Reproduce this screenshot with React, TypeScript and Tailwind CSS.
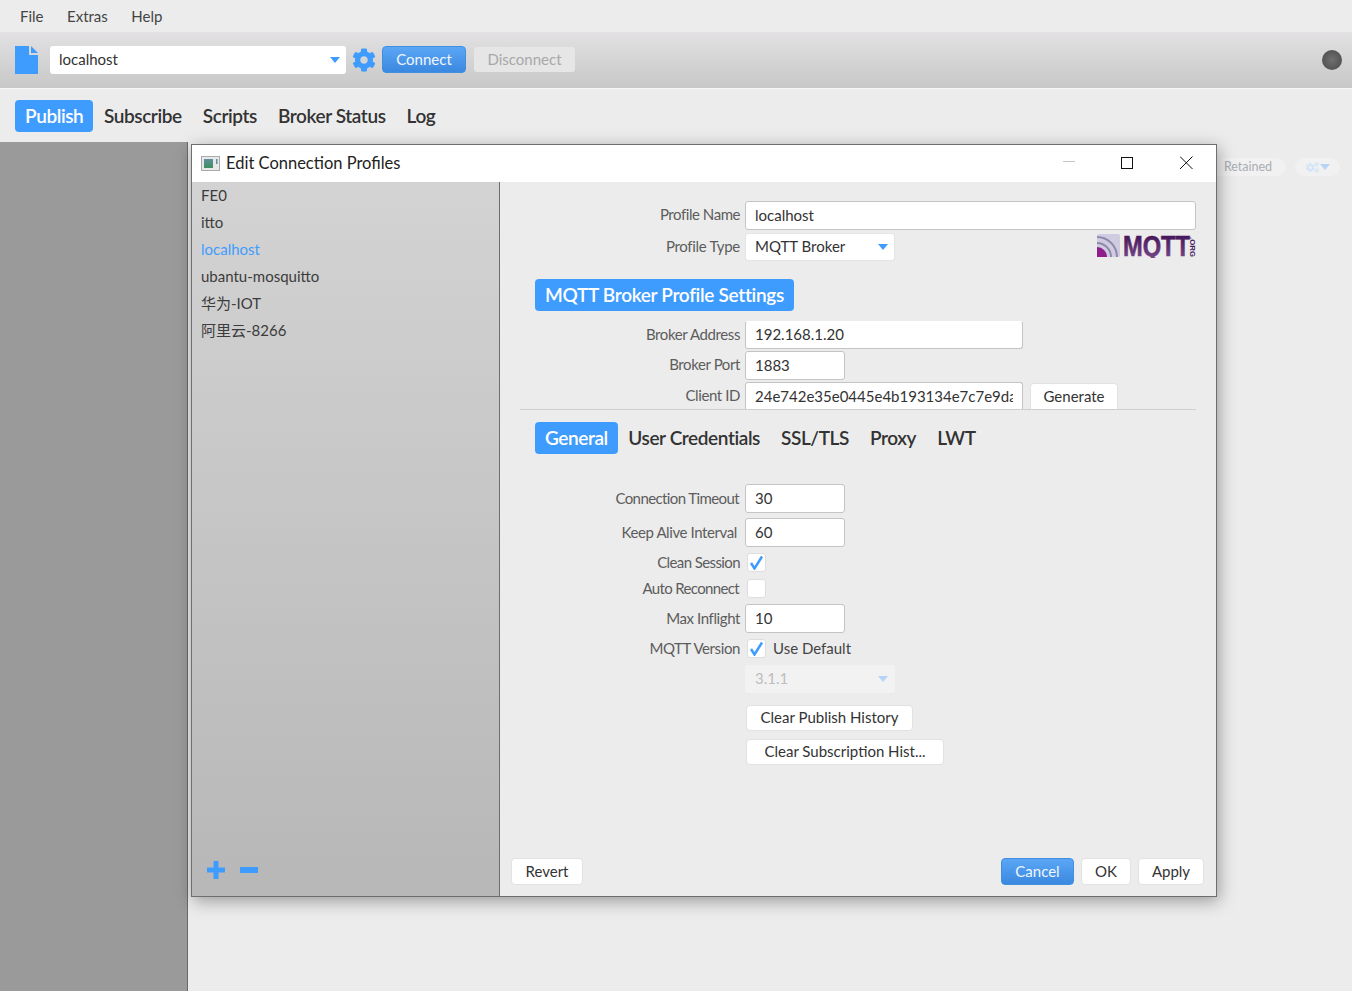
import type { ReactNode } from 'react';
import { FaCog, FaCogs } from 'react-icons/fa';

const font = "font-['Lato','Noto_Sans_CJK_SC',sans-serif]";

function Label({ children, className = '', track = 'tracking-[-0.4px]' }: { children: ReactNode; className?: string; track?: string }) {
  return <div className={`w-[245px] shrink-0 text-right text-[15px] leading-[19px] text-[#5c5c5c] ${track} ${className}`}>{children}</div>;
}

function Field({ value, className = '' }: { value: string; className?: string }) {
  return (
    <div className={`flex items-center overflow-hidden rounded-[3px] border border-[#c4c4c4] bg-white pl-[9px] text-[15px] text-[#333] ${className}`}>
      <span className="whitespace-nowrap">{value}</span>
    </div>
  );
}

function Btn({ children, className = '' }: { children: ReactNode; className?: string }) {
  return (
    <div className={`flex items-center justify-center rounded-[4px] border border-[#e2e2e2] bg-white text-[15px] text-[#333] ${className}`}>
      {children}
    </div>
  );
}

function Caret({ color = '#3f9cff' }: { color?: string }) {
  return (
    <svg width="10" height="6" viewBox="0 0 10 6" className="shrink-0">
      <path d="M0 0h10L5 6z" fill={color} />
    </svg>
  );
}

function Check({ checked }: { checked?: boolean }) {
  return (
    <div className="ml-[2px] flex h-[19px] w-[19px] items-center justify-center rounded-[3px] border border-[#dedede] bg-white">
      {checked && (
        <svg width="15" height="15" viewBox="0 0 15 15" fill="none">
          <path d="M2 8l3.500 5.500L13 1.500" stroke="#3f9cff" strokeWidth="2.500" />
        </svg>
      )}
    </div>
  );
}

function TabRow({ items, className = '' }: { items: string[]; className?: string }) {
  return (
    <div className={`flex items-center text-[19px] font-semibold tracking-[-0.4px] text-[#333] ${className}`}>
      {items.map((t, i) =>
        i === 0 ? (
          <div key={t} className="flex h-[32px] items-center rounded-[4px] bg-[#3f9cff] px-[10px] text-white">{t}</div>
        ) : (
          <div key={t} className="px-[10.500px]">{t}</div>
        ),
      )}
    </div>
  );
}

function MqttLogo() {
  return (
    <svg width="99" height="24" viewBox="0 0 99 24" className="mt-[1px] self-start">
      <defs>
        <linearGradient id="mq" x1="0" y1="0" x2="0" y2="1">
          <stop offset="0" stopColor="#3a0a4f" />
          <stop offset="1" stopColor="#7d4f8e" />
        </linearGradient>
      </defs>
      <rect x="0" y="0" width="23" height="23" rx="2" fill="#cfcbe0" />
      <path d="M0 3a20 20 0 0 1 20 20M0 9a14 14 0 0 1 14 14" stroke="#8f88ac" strokeWidth="2" fill="none" />
      <path d="M0 13a10 10 0 0 1 10 10H0z" fill="#8e1f8a" />
      <text x="26" y="22" textLength="67" lengthAdjust="spacingAndGlyphs" fontFamily="Liberation Sans" fontWeight="700" fontSize="29" fill="url(#mq)" stroke="url(#mq)" strokeWidth="0.600">MQTT</text>
      <text x="0" y="0" textLength="20" lengthAdjust="spacingAndGlyphs" transform="translate(93 3) rotate(90)" fontFamily="Liberation Sans" fontWeight="700" fontSize="8" fill="#4a1a60">.ORG</text>
    </svg>
  );
}

export default function App() {
  return (
    <div className={`relative flex h-[991px] w-[1352px] flex-col overflow-hidden bg-[#ececec] ${font}`}>
      {/* menu bar */}
      <div className="flex h-[32px] items-center gap-[23.500px] pl-[20px] text-[15px] text-[#444]">
        <span>File</span>
        <span>Extras</span>
        <span>Help</span>
      </div>

      {/* toolbar */}
      <div className="flex h-[57px] items-center border-b border-[#f6f6f6] bg-gradient-to-b from-[#e3e1e3] to-[#c8c8c8] pb-[1px] pl-[15px] pr-[10px]">
        <svg width="23" height="28" viewBox="0 0 23 28">
          <path d="M0 0h14v9h9v19H0z" fill="#3f9cff" />
          <path d="M16 0l7 7h-7z" fill="#3f9cff" />
        </svg>
        <div className="ml-[12px] flex h-[28px] w-[296px] items-center justify-between rounded-[3px] bg-white pl-[9px] pr-[6px] text-[15px] text-[#333]">
          <span>localhost</span>
          <Caret />
        </div>
        <FaCog size={24} color="#3f9cff" className="ml-[6px] shrink-0" />
        <div className="ml-[6px] flex h-[27px] w-[84px] items-center justify-center rounded-[4px] border border-[#3f8fe0] bg-gradient-to-b from-[#5ba6f5] to-[#3a88e0] text-[15px] text-[#f0f6ff]">Connect</div>
        <div className="ml-[8px] flex h-[25px] w-[101px] items-center justify-center rounded-[3px] bg-[#e6e6e6] text-[15px] text-[#a8a8a8]">Disconnect</div>
        <div className="ml-auto h-[20px] w-[20px] rounded-full bg-[radial-gradient(circle,#707070,#484848)]" />
      </div>

      {/* main tabs */}
      <TabRow items={['Publish', 'Subscribe', 'Scripts', 'Broker Status', 'Log']} className="h-[53px] shrink-0 pl-[15px] pt-[1px]" />

      {/* dimmed window body */}
      <div className="flex flex-1">
        <div className="w-[188px] border-r border-[#6a6a6a] bg-[#9a9a9a]" />
        <div className="flex flex-1 items-start justify-end gap-[9px] pr-[12px] pt-[16px]">
          <div className="flex h-[18px] w-[76px] items-center justify-center rounded-full bg-[#f1f1f1] text-[12.500px] text-[#a9adb3]">Retained</div>
          <div className="flex h-[18px] w-[45px] items-center justify-center gap-[1px] rounded-full bg-[#f1f1f1]">
            <FaCogs size={13} color="#d3e5f7" />
            <Caret color="#b6d5f6" />
          </div>
        </div>
      </div>

      {/* modal dialog */}
      <div className="absolute left-[191px] top-[144px] flex h-[753px] w-[1026px] flex-col border border-[#6e6e6e] bg-[#ececec] shadow-[2px_4px_16px_rgba(0,0,0,0.35)]">
        <div className="flex h-[37px] shrink-0 items-center bg-white pb-[1px] pl-[9px] text-[16.500px] text-[#222]">
          <svg width="19" height="15" viewBox="0 0 19 15" className="mr-[6px]">
            <rect x="0.500" y="0.500" width="18" height="14" fill="#e8e8e8" stroke="#aaa" />
            <defs>
              <linearGradient id="ic" x1="0" y1="0" x2="0" y2="1">
                <stop offset="0" stopColor="#5f8f9f" />
                <stop offset="1" stopColor="#3f8f5f" />
              </linearGradient>
            </defs>
            <rect x="3" y="3" width="9" height="9" fill="url(#ic)" />
            <rect x="15" y="3" width="1.500" height="5" fill="#5f8f9f" />
          </svg>
          <span>Edit Connection Profiles</span>
          <div className="ml-auto mr-[5px] flex items-center">
            <svg width="58" height="16" viewBox="0 0 58 16"><path d="M0 6.500h12" stroke="#c4c4c4" /></svg>
            <svg width="59" height="16" viewBox="0 0 59 16"><rect x="0.500" y="2.500" width="11" height="11" fill="none" stroke="#111" /></svg>
            <svg width="13" height="16" viewBox="0 0 13 16" className="mr-[18px]"><path d="M0 1.500l12.500 12.500M12.500 1.500L0 14" stroke="#111" /></svg>
          </div>
        </div>

        <div className="flex min-h-0 flex-1">
          {/* profile list */}
          <div className="flex w-[308px] shrink-0 flex-col border-r border-[#6e6e6e] bg-gradient-to-b from-[#d3d3d3] to-[#b7b7b7] pl-[9px] text-[15px] text-[#3c3c3c]">
            <div className="flex flex-col">
              {['FE0', 'itto', 'localhost', 'ubantu-mosquitto', '华为-IOT', '阿里云-8266'].map((p) => (
                <div key={p} className={`flex h-[27px] items-center ${p === 'localhost' ? 'text-[#3f9cff]' : ''}`}>{p}</div>
              ))}
            </div>
            <div className="mb-[17px] ml-[6px] mt-auto flex items-center gap-[15px]">
              <svg width="18" height="18" viewBox="0 0 18 18"><path d="M6.500 0h5v6.500H18v5h-6.500V18h-5v-6.500H0v-5h6.500z" fill="#3f9cff" /></svg>
              <svg width="18" height="6" viewBox="0 0 18 6"><rect width="18" height="6" fill="#3f9cff" /></svg>
            </div>
          </div>

          {/* profile form */}
          <div className="flex min-w-0 flex-1 flex-col">
            <div className="mt-[19px] flex items-center">
              <Label className="pb-[2px] pr-[5px]" track="tracking-[-0.45px]">Profile Name</Label>
              <Field value="localhost" className="h-[29px] w-[451px]" />
            </div>
            <div className="mt-[3px] flex h-[28px] items-center">
              <Label className="pb-[2px] pr-[5px]" track="tracking-[-0.3px]">Profile Type</Label>
              <div className="flex h-[28px] w-[150px] items-center justify-between rounded-[3px] border border-[#e4e4e4] bg-white pb-[1px] pl-[9px] pr-[6px] text-[15px] text-[#333]">
                <span>MQTT Broker</span>
                <Caret />
              </div>
              <div className="ml-auto mr-[20px] flex self-start"><MqttLogo /></div>
            </div>
            <div className="ml-[35px] mt-[18px] flex h-[32px] w-fit items-center rounded-[4px] bg-[#3f9cff] px-[10px] text-[19px] font-semibold tracking-[-0.3px] text-white">MQTT Broker Profile Settings</div>
            <div className="mt-[10px] flex items-center">
              <Label className="pb-[2px] pr-[5px]">Broker Address</Label>
              <Field value="192.168.1.20" className="h-[28px] w-[278px] border-t-white pb-[1px]" />
            </div>
            <div className="mt-[2px] flex items-center">
              <Label className="pb-[2px] pr-[5px]">Broker Port</Label>
              <Field value="1883" className="h-[29px] w-[100px]" />
            </div>
            <div className="mt-[2px] flex h-[27px] items-start">
              <Label className="pr-[5px] pt-[4px]">Client ID</Label>
              <div className="flex h-[27px] w-[278px] items-center overflow-hidden rounded-t-[3px] border border-b-0 border-[#c4c4c4] bg-white px-[9px] text-[15px] text-[#333]">
                <span className="overflow-hidden whitespace-nowrap">24e742e35e0445e4b193134e7c7e9da8</span>
              </div>
              <Btn className="ml-[7px] mt-[1px] h-[26px] w-[88px] rounded-b-none border-b-0">Generate</Btn>
            </div>
            <div className="ml-[20px] mr-[20px] border-t border-[#cfcfcf]" />
            <TabRow items={['General', 'User Credentials', 'SSL/TLS', 'Proxy', 'LWT']} className="ml-[35px] mt-[12px]" />

            <div className="mt-[30px] flex items-center">
              <Label className="pr-[6px]" track="tracking-[-0.6px]">Connection Timeout</Label>
              <Field value="30" className="h-[29px] w-[100px]" />
            </div>
            <div className="mt-[5px] flex items-center">
              <Label className="pr-[8px]">Keep Alive Interval</Label>
              <Field value="60" className="h-[29px] w-[100px]" />
            </div>
            <div className="mt-[6px] flex items-center">
              <Label className="pr-[5px]" track="tracking-[-0.6px]">Clean Session</Label>
              <Check checked />
            </div>
            <div className="mt-[7px] flex items-center">
              <Label className="pr-[6px]" track="tracking-[-0.65px]">Auto Reconnect</Label>
              <Check />
            </div>
            <div className="mt-[6px] flex items-center">
              <Label className="pr-[5px]">Max Inflight</Label>
              <Field value="10" className="h-[29px] w-[100px]" />
            </div>
            <div className="mt-[6px] flex items-center">
              <Label className="pr-[5px]">MQTT Version</Label>
              <Check checked />
              <span className="ml-[7px] text-[15px] leading-[19px] text-[#444]">Use Default</span>
            </div>
            <div className="ml-[245px] mt-[7px] flex h-[28px] w-[150px] items-center justify-between rounded-[3px] bg-[#f2f2f2] pb-[1px] pl-[10px] pr-[7px] text-[15px] text-[#bdbdbd]">
              <span>3.1.1</span>
              <Caret color="#b6d5f6" />
            </div>
            <Btn className="ml-[246px] mt-[12px] h-[26px] w-[167px] pb-[2px]">Clear Publish History</Btn>
            <Btn className="ml-[246px] mt-[8px] h-[26px] w-[198px] pb-[2px]">Clear Subscription Hist...</Btn>

            <div className="mb-[11px] mt-auto flex items-center pl-[11px] pr-[12px]">
              <Btn className="h-[27px] w-[72px]">Revert</Btn>
              <div className="ml-auto flex h-[27px] w-[73px] items-center justify-center rounded-[4px] border border-[#3f8fe0] bg-gradient-to-b from-[#5ba6f5] to-[#3a88e0] text-[15px] text-[#f0f6ff]">Cancel</div>
              <Btn className="ml-[7px] h-[27px] w-[50px]">OK</Btn>
              <Btn className="ml-[7px] h-[27px] w-[66px]">Apply</Btn>
            </div>
          </div>
        </div>
      </div>
    </div>
  );
}
